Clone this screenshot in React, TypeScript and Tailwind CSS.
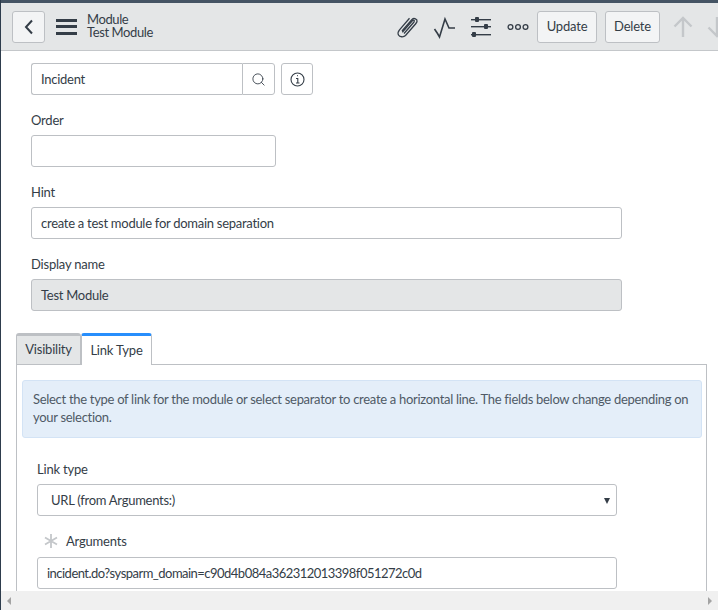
import { Search } from "lucide-react";

const labelClass = "text-[13px] tracking-[-0.2px] leading-[20px] text-[#343d47]";
const inputClass =
    "h-[32px] border border-[#bdc0c4] rounded-[3px] px-[9px] pt-[2px] flex items-center text-[13px] tracking-[-0.27px] text-[#343d47]";

const HeaderIcons = () => {
    return (
        <div className="flex items-center text-[#343d47] shrink-0">
            <svg width="24" height="24" viewBox="0 0 24 24" fill="none" stroke="currentColor" strokeWidth="1.3">
                <path d="M6 16 L16 4.5 C18 2.5 21.5 4 21 6.5 C20.8 7.5 20 8.3 19.5 9 L9.5 20.5 C7.5 22.5 3.5 22 2.5 20 C1.5 18 2.5 16 3.5 14.8 L13.5 3.3" />
                <path d="M8 18.5 L18 7 C19 5.5 17.5 4.5 16.3 5.8 L6.3 17.2" />
            </svg>
            <svg width="24" height="24" viewBox="0 0 24 24" fill="none" stroke="currentColor" strokeWidth="1.6" className="ml-[13px]">
                <path d="M1.5 14 L4.5 18.5 L6.5 22 L12 4 L16 13 L22 13" />
            </svg>
            <svg width="22" height="22" viewBox="0 0 22 22" className="ml-[13px]" fill="currentColor">
                <rect x="1" y="3" width="20" height="1.4" />
                <rect x="5" y="1" width="4" height="5" rx="1" />
                <rect x="1" y="10" width="20" height="1.4" />
                <rect x="14" y="8" width="4" height="5" rx="1" />
                <rect x="1" y="18" width="20" height="1.4" />
                <rect x="2" y="16" width="4" height="5" rx="1" />
            </svg>
            <svg width="22" height="8" viewBox="0 0 22 8" fill="none" stroke="currentColor" strokeWidth="1.3" className="ml-[15px]">
                <circle cx="3.5" cy="4" r="2.4" />
                <circle cx="11" cy="4" r="2.4" />
                <circle cx="18.5" cy="4" r="2.4" />
            </svg>
        </div>
    );
};

const HeaderButton = ({ label, width }: { label: string; width: string }) => {
    return (
        <button className={`${width} h-[32px] shrink-0 border border-[#bdc0c4] rounded-[3px] bg-[#f3f4f5] text-[13px] tracking-[-0.2px] text-[#343d47]`}>
            {label}
        </button>
    );
};

export default function App() {
    return (
        <div className="w-[718px] h-[610px] overflow-hidden flex flex-col bg-white font-['Lato',sans-serif] border-l border-l-[#2e3d4d]">
            <div className="h-[3px] shrink-0 bg-[#455464]" />

            <header className="h-[48px] shrink-0 bg-[#e4e6e7] border-b border-[#c4c7ca] flex items-center overflow-hidden">
                <button className="ml-[11px] w-[33px] h-[32px] shrink-0 border border-[#bdc0c4] rounded-[3px] bg-[#f3f4f5] flex items-center justify-center">
                    <svg width="10" height="16" viewBox="0 0 10 16" fill="none" stroke="#343d47" strokeWidth="2">
                        <path d="M8 1.5 L2 8 L8 14.5" />
                    </svg>
                </button>
                <div className="ml-[11px] w-[21px] shrink-0 flex flex-col gap-[3.5px]">
                    <div className="h-[3px] bg-[#343d47]" />
                    <div className="h-[3px] bg-[#343d47]" />
                    <div className="h-[3px] bg-[#343d47]" />
                </div>
                <div className="ml-[10px] w-[309px] shrink-0 text-[13px] tracking-[-0.4px] leading-[13px] text-[#343d47] -mt-[2px]">
                    <div>Module</div>
                    <div>Test Module</div>
                </div>
                <HeaderIcons />
                <div className="flex gap-[8px] ml-[8px]">
                    <HeaderButton label="Update" width="w-[60px]" />
                    <HeaderButton label="Delete" width="w-[55px]" />
                </div>
                <svg width="22" height="24" viewBox="0 0 22 24" fill="none" stroke="#c4c7ca" strokeWidth="2.4" className="ml-[12px] shrink-0">
                    <path d="M11 22 V3 M2.5 11.5 L11 3 L19.5 11.5" />
                </svg>
                <svg width="22" height="24" viewBox="0 0 22 24" fill="none" stroke="#c4c7ca" strokeWidth="2.4" className="ml-[12px] shrink-0">
                    <path d="M11 2 V21 M2.5 12.5 L11 21 L19.5 12.5" />
                </svg>
            </header>

            <main className="flex-1 overflow-hidden pl-[30px] pt-[12px] text-[#343d47]">
                <div className="flex items-center">
                    <div className={`${inputClass} bg-white w-[211px] rounded-r-none border-r-0`}>Incident</div>
                    <div className="w-[33px] h-[32px] border border-[#bdc0c4] rounded-r-[3px] flex items-center justify-center">
                        <Search size={15} strokeWidth={1.4} />
                    </div>
                    <div className="ml-[6px] w-[32px] h-[32px] border border-[#bdc0c4] rounded-[3px] flex items-center justify-center">
                        <svg width="15" height="15" viewBox="0 0 15 15" fill="none" stroke="#343d47" strokeWidth="1.1">
                            <circle cx="7.5" cy="7.5" r="6.5" />
                            <path d="M6 6.5 H7.8 V11 M6 11 H9.5 M7.2 3.6 H8" />
                        </svg>
                    </div>
                </div>

                <div className={`${labelClass} mt-[15px]`}>Order</div>
                <div className={`${inputClass} bg-white w-[245px] mt-[5px]`} />

                <div className={`${labelClass} mt-[15px]`}>Hint</div>
                <div className={`${inputClass} bg-white w-[591px] mt-[5px]`}>create a test module for domain separation</div>

                <div className={`${labelClass} mt-[15px]`}>Display name</div>
                <div className={`${inputClass} bg-[#e4e6e7] w-[591px] mt-[5px]`}>Test Module</div>

                <div className="-ml-[15px] mt-[22px] w-[691px]">
                    <div className="flex h-[32px] text-[13px] tracking-[-0.2px]">
                        <div className="w-[65px] h-[32px] bg-[#e4e6e7] border border-[#bdc0c4] border-t-[3px] border-t-[#bdc0c4] rounded-t-[3px] flex items-center justify-center">
                            Visibility
                        </div>
                        <div className="w-[71px] h-[32px] bg-white border-x border-[#bdc0c4] border-t-[3px] border-t-[#278efc] rounded-t-[3px] flex items-center justify-center relative z-10">
                            Link Type
                        </div>
                    </div>
                    <div className="border border-[#bdc0c4] -mt-px h-[300px] px-[5px] pt-[15px]">
                        <div className="h-[58px] w-[680px] bg-[#e4eef9] border border-[#d3e3f5] rounded-[3px] px-[10px] py-[9px] text-[13px] tracking-[-0.3px] leading-[18px] text-[#4f5a66]">
                            Select the type of link for the module or select separator to create a horizontal line. The fields below change depending on your selection.
                        </div>
                        <div className="pl-[15px]">
                            <div className={`${labelClass} mt-[21px]`}>Link type</div>
                            <div className={`${inputClass} bg-white w-[580px] mt-[5px] pl-[13px] justify-between`}>
                                <span>URL (from Arguments:)</span>
                                <span className="w-0 h-0 border-x-[3px] border-x-transparent border-t-[6px] border-t-[#343d47] mr-[-3px]" />
                            </div>
                            <div className="flex items-center mt-[15px]">
                                <svg width="14" height="14" viewBox="0 0 14 14" stroke="#c4c7ca" strokeWidth="1.8" className="ml-[7px]">
                                    <path d="M7 0 V14 M1 3.5 L13 10.5 M13 3.5 L1 10.5" />
                                </svg>
                                <span className={`${labelClass} ml-[8px]`}>Arguments</span>
                            </div>
                            <div className={`${inputClass} bg-white w-[580px] mt-[6px] tracking-[-0.52px]`}>incident.do?sysparm_domain=c90d4b084a362312013398f051272c0d</div>
                        </div>
                    </div>
                </div>
            </main>

            <div className="h-[19px] shrink-0 bg-[#f0f0f0] flex items-center justify-between px-[6px] relative z-10">
                <span className="w-0 h-0 border-y-[4px] border-y-transparent border-r-[4px] border-r-[#a3a3a3]" />
                <span className="w-0 h-0 border-y-[4px] border-y-transparent border-l-[4px] border-l-[#a3a3a3]" />
            </div>
        </div>
    );
}
